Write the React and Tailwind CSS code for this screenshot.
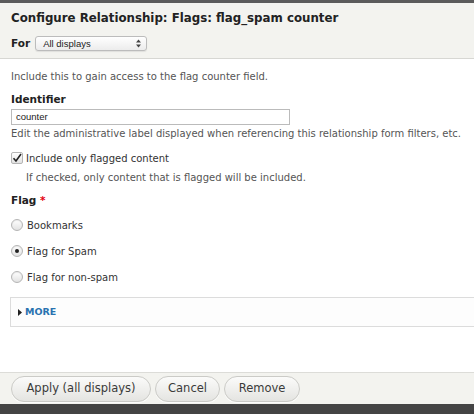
import React from 'react';

const font = { fontFamily: '"DejaVu Sans", "Open Sans", sans-serif' };
const arial = { fontFamily: '"Liberation Sans", Arial, sans-serif' };

const Radio = ({ checked, label }) => (
    <label className="h-[16px] flex items-center gap-[4px] text-[10px] text-[#333]">
        <span className="w-[12px] h-[12px] rounded-full border border-[#b5b5b5] bg-gradient-to-b from-white to-[#e2e2e2] flex items-center justify-center shadow-[inset_0_1px_1px_rgba(0,0,0,0.08)]">
            {checked && <span className="w-[4px] h-[4px] rounded-full bg-[#222]"></span>}
        </span>
        {label}
    </label>
);

const Button = ({ children, className = '' }) => (
    <button className={`h-[26px] rounded-full border border-[#cbcbc7] bg-gradient-to-b from-[#fbfbfa] to-[#e4e4e1] text-[11.5px] text-[#3a3a3a] shadow-[0_1px_0_rgba(255,255,255,0.8)] ${className}`}>
        {children}
    </button>
);

export default function App() {
    return (
        <div className="w-[474px] h-[414px] flex flex-col bg-white overflow-hidden" style={font}>
            <div className="h-[3px] bg-[#5b5b5b]"></div>

            {/* Header */}
            <div className="h-[56px] bg-[#f3f3ef] border-b border-[#d7d7d3] px-[11px] pt-[6px]">
                <h1 className="text-[11.8px] font-bold text-[#222] leading-[18px]">Configure Relationship: Flags: flag_spam counter</h1>
                <div className="flex items-center gap-[5px] mt-[9px]">
                    <span className="text-[10.5px] font-bold text-[#222]">For</span>
                    <div className="w-[112px] h-[15px] rounded-[3px] border border-[#bcbcbc] bg-gradient-to-b from-white to-[#ececec] flex items-center justify-between pl-[7px] pr-[5px] shadow-[0_1px_1px_rgba(0,0,0,0.08)]">
                        <span className="text-[9.5px] text-[#222]" style={arial}>All displays</span>
                        <svg width="5" height="9" viewBox="0 0 5 9">
                            <path d="M0 3.5 L2.5 0.5 L5 3.5 Z" fill="#444" />
                            <path d="M0 5.5 L2.5 8.5 L5 5.5 Z" fill="#444" />
                        </svg>
                    </div>
                </div>
            </div>

            {/* Body */}
            <div className="flex-1 px-[11px] pt-[10px] text-[#555]">
                <p className="text-[10px] leading-[16px]">Include this to gain access to the flag counter field.</p>

                <div className="mt-[6px]">
                    <div className="text-[10.5px] font-bold text-[#222] leading-[16px]">Identifier</div>
                    <div className="mt-[2px] w-[279px] h-[16px] border border-[#bbb] bg-white flex items-center px-[4px] text-[9.5px] text-[#222]" style={arial}>
                        counter
                    </div>
                    <p className="text-[10px] leading-[16px] mt-[1px] whitespace-nowrap">Edit the administrative label displayed when referencing this relationship form filters, etc.</p>
                </div>

                <div className="mt-[8px]">
                    <label className="h-[16px] flex items-center gap-[3px] text-[10px] text-[#333]">
                        <span className="w-[12px] h-[12px] rounded-[2px] border border-[#b5b5b5] bg-gradient-to-b from-white to-[#e2e2e2] flex items-center justify-center">
                            <svg width="10" height="10" viewBox="0 0 10 10"><path d="M1.5 5.2 L4 8 L9 1" stroke="#222" strokeWidth="1.6" fill="none" /></svg>
                        </span>
                        Include only flagged content
                    </label>
                    <p className="text-[10px] leading-[16px] mt-[4px] pl-[15px]">If checked, only content that is flagged will be included.</p>
                </div>

                <div className="mt-[6px]">
                    <div className="text-[10.5px] font-bold text-[#222] leading-[16px]">Flag <span className="text-[#e3000f]">*</span></div>
                    <div className="flex flex-col gap-[10px] mt-[9px]">
                        <Radio label="Bookmarks" />
                        <Radio checked label="Flag for Spam" />
                        <Radio label="Flag for non-spam" />
                    </div>
                </div>

                <div className="mt-[12px] -ml-[1px] -mr-[11px] h-[30px] border border-r-0 border-[#dcdcdc] bg-[#fdfdfd] flex items-center pl-[7px] gap-[3px]">
                    <svg width="4" height="7" viewBox="0 0 4 7"><path d="M0 0 L4 3.5 L0 7 Z" fill="#222" /></svg>
                    <span className="text-[9.5px] font-bold text-[#2a72b0]">MORE</span>
                </div>
            </div>

            {/* Footer */}
            <div className="h-[32px] bg-[#f3f3ef] border-t border-[#dcdcd8] flex items-center gap-[4px] px-[11px] pt-[1px]">
                <Button className="w-[140px]">Apply (all displays)</Button>
                <Button className="w-[65px]">Cancel</Button>
                <Button className="w-[76px]">Remove</Button>
            </div>
            <div className="h-[10px] bg-[#444]"></div>
        </div>
    );
}
